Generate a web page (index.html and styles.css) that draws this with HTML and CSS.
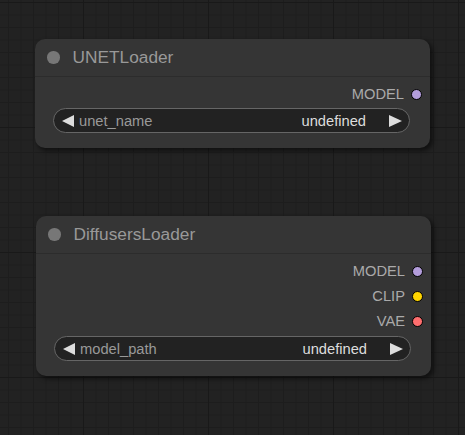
FILE: index.html
```html
<!DOCTYPE html>
<html>
<head>
<meta charset="utf-8">
<link rel="stylesheet" href="styles.css">
</head>
<body>
<div class="canvas">
  <div class="node node-unet">
    <div class="title">
      <span class="title-dot"></span>
      <span class="title-text">UNETLoader</span>
    </div>
    <div class="body">
      <div class="output"><span class="label">MODEL</span><span class="slot slot-model"></span></div>
      <div class="widget">
        <span class="arrow arrow-left"></span>
        <span class="w-name">unet_name</span>
        <span class="w-value">undefined</span>
        <span class="arrow arrow-right"></span>
      </div>
    </div>
  </div>

  <div class="node node-diff">
    <div class="title">
      <span class="title-dot"></span>
      <span class="title-text">DiffusersLoader</span>
    </div>
    <div class="body">
      <div class="output"><span class="label">MODEL</span><span class="slot slot-model"></span></div>
      <div class="output"><span class="label">CLIP</span><span class="slot slot-clip"></span></div>
      <div class="output"><span class="label">VAE</span><span class="slot slot-vae"></span></div>
      <div class="widget">
        <span class="arrow arrow-left"></span>
        <span class="w-name">model_path</span>
        <span class="w-value">undefined</span>
        <span class="arrow arrow-right"></span>
      </div>
    </div>
  </div>
</div>
</body>
</html>
```

FILE: styles.css
```css
html, body {
  margin: 0;
  padding: 0;
  width: 100%;
  height: 100%;
}

html {
  background-color: #222222;
  background-image:
    linear-gradient(to right, #191919 1px, transparent 1px),
    linear-gradient(to bottom, #191919 1px, transparent 1px),
    linear-gradient(to right, #1d1d1d 1px, transparent 1px),
    linear-gradient(to bottom, #1d1d1d 1px, transparent 1px);
  background-size: 125px 125px, 125px 125px, 12.5px 12.5px, 12.5px 12.5px;
  background-position: 83px 127px, 83px 127px, 8px 2px, 8px 2px;
}

body {
  font-family: "Liberation Sans", Arial, sans-serif;
  overflow: hidden;
}

.canvas {
  display: flex;
  flex-direction: column;
  align-items: flex-start;
  padding: 39px 0 0 35px;
  gap: 68px;
}

.node {
  width: 395px;
  background: #353535;
  border-radius: 10px;
  box-shadow: 2.5px 2.5px 4px rgba(0, 0, 0, 0.5);
}

.node-diff {
  margin-left: 1px;
}

.title {
  height: 37px;
  display: flex;
  align-items: center;
  padding-left: 12px;
  border-bottom: 1px solid #2c2c2c;
}

.title-dot {
  width: 12.5px;
  height: 12.5px;
  border-radius: 50%;
  background: #777;
  margin-right: 13px;
  flex: none;
}

.title-text {
  color: #999;
  font-size: 17.3px;
  line-height: 1;
}

.body {
  display: flex;
  flex-direction: column;
  gap: 5px;
  padding: 7px 0 15px 0;
}

.node-unet .body {
  padding-bottom: 15px;
}

.node-unet .widget {
  margin-top: -1px;
}

.output {
  height: 20px;
  display: flex;
  justify-content: flex-end;
  align-items: center;
  padding-right: 8px;
  gap: 7px;
}

.label {
  color: #aaa;
  font-size: 14.7px;
}

.slot {
  width: 9px;
  height: 9px;
  border-radius: 50%;
  border: 1px solid #000;
  flex: none;
}

.slot-model { background: #b39ddb; }
.slot-clip { background: #ffd500; }
.slot-vae { background: #ff6e6e; }

.widget {
  margin: 0 20px 0 18px;
  height: 23px;
  border: 1px solid #666;
  border-radius: 13px;
  background: #222;
  display: flex;
  align-items: center;
  padding: 0 7px 0 8px;
  font-size: 14.7px;
}

.arrow {
  width: 0;
  height: 0;
  border-top: 6px solid transparent;
  border-bottom: 6px solid transparent;
  flex: none;
}

.arrow-left {
  border-right: 12px solid #ddd;
  margin-right: 5px;
}

.arrow-right {
  border-left: 13px solid #ddd;
  margin-left: 23px;
}

.w-name {
  color: #999;
  flex: 1;
}

.w-value {
  color: #ddd;
}
```
